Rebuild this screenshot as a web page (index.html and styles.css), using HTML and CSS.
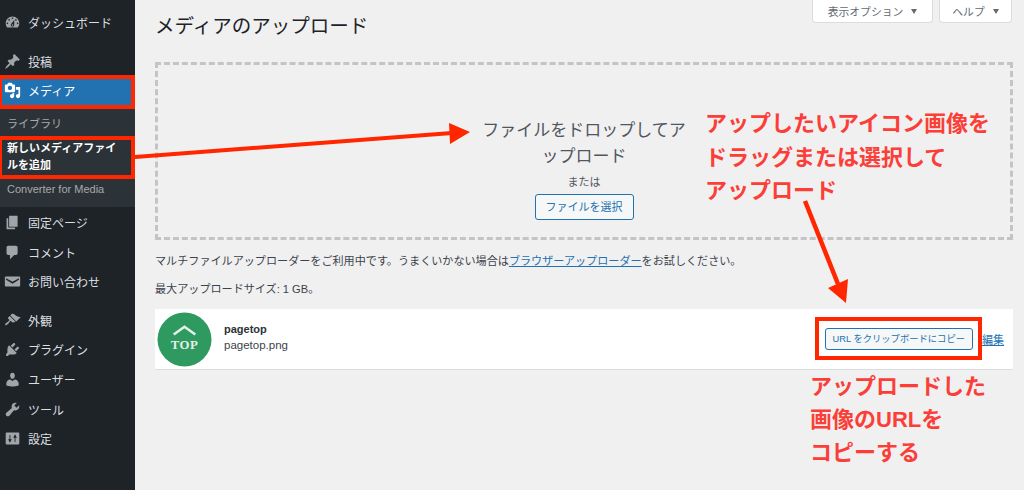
FILE: index.html
```html
<!DOCTYPE html>
<html lang="ja">
<head>
<meta charset="utf-8">
<title>メディアのアップロード</title>
<link rel="stylesheet" href="styles.css">
</head>
<body>
<div class="page">
  <nav class="sidebar">
    <ul class="menu">
      <li class="item"><svg class="icon" viewBox="0 0 20 20"><path d="M3.76 16h12.48c1.1-1.37 1.76-3.11 1.76-5 0-4.42-3.58-8-8-8s-8 3.58-8 8c0 1.89.66 3.63 1.76 5zM10 4c.55 0 1 .45 1 1s-.45 1-1 1-1-.45-1-1 .45-1 1-1zM6 6c.55 0 1 .45 1 1s-.45 1-1 1-1-.45-1-1 .45-1 1-1zm8 0c.55 0 1 .45 1 1s-.45 1-1 1-1-.45-1-1 .45-1 1-1zm-5.37 5.55L12 7v6c0 1.1-.9 2-2 2s-2-.9-2-2c0-.57.24-1.08.63-1.45zM4 10c.55 0 1 .45 1 1s-.45 1-1 1-1-.45-1-1 .45-1 1-1zm12 0c.55 0 1 .45 1 1s-.45 1-1 1-1-.45-1-1 .45-1 1-1zm-5 3c0-.55-.45-1-1-1s-1 .45-1 1 .45 1 1 1 1-.45 1-1z"/></svg>ダッシュボード</li>
      <li class="item sep"><svg class="icon" viewBox="0 0 20 20"><path d="M10.44 3.02l1.82-1.82 6.36 6.35-1.83 1.82c-1.05-.68-2.48-.57-3.41.36l-.75.75c-.92.93-1.04 2.35-.35 3.41l-1.83 1.82-2.41-2.41-2.8 2.79c-.42.42-3.38 2.71-3.8 2.29s1.86-3.39 2.28-3.81l2.79-2.79L4.1 9.36l1.83-1.82c1.05.69 2.48.57 3.4-.36l.75-.75c.93-.92 1.05-2.35.36-3.41z"/></svg>投稿</li>
      <li class="item current"><svg class="icon" viewBox="0 0 20 20"><path d="M13 11V4c0-.55-.45-1-1-1h-1.67L9 1H5L3.67 3H2c-.55 0-1 .45-1 1v7c0 .55.45 1 1 1h10c.55 0 1-.45 1-1zM7 4.5c1.38 0 2.5 1.12 2.5 2.5S8.38 9.5 7 9.5 4.5 8.38 4.5 7 5.62 4.5 7 4.5zM14 6h5v10.5c0 1.38-1.12 2.5-2.5 2.5S14 17.88 14 16.5s1.12-2.5 2.5-2.5c.17 0 .34.02.5.05V9h-3V6zm-4 8.05V13h2v3.5c0 1.38-1.12 2.5-2.5 2.5S7 17.88 7 16.5 8.12 14 9.5 14c.17 0 .34.02.5.05z"/></svg>メディア</li>
      <li class="submenu">
        <a class="subitem">ライブラリ</a>
        <a class="subitem active">新しいメディアファイルを追加</a>
        <a class="subitem">Converter for Media</a>
      </li>
      <li class="item"><svg class="icon" viewBox="0 0 20 20"><path d="M6 15V2h10v13H6zm-1 1h8v2H3V5h2v11z"/></svg>固定ページ</li>
      <li class="item"><svg class="icon" viewBox="0 0 20 20"><path d="M5 2h9c1.1 0 2 .9 2 2v7c0 1.1-.9 2-2 2h-2l-5 5v-5H5c-1.1 0-2-.9-2-2V4c0-1.1.9-2 2-2z"/></svg>コメント</li>
      <li class="item"><svg class="icon" viewBox="0 0 20 20"><path fill-rule="evenodd" d="M2 4h16c.6 0 1 .4 1 1v10c0 .6-.4 1-1 1H2c-.6 0-1-.4-1-1V5c0-.6.4-1 1-1zm.5 2.2v1.7L10 12.6l7.5-4.7V6.200L10 10.400z"/></svg>お問い合わせ</li>
      <li class="item sep"><svg class="icon" viewBox="0 0 20 20"><path d="M14.48 11.06L7.41 3.99l1.5-1.5c.5-.56 2.3-.47 3.51.32 1.21.8 1.43 1.28 2.91 2.1 1.18.64 2.45 1.26 4.45.85zm-.71.71L6.7 4.7 4.93 6.47c-.39.39-.39 1.02 0 1.41l1.06 1.06c.39.39.39 1.03 0 1.42-.6.6-1.43 1.11-2.21 1.69-.35.26-.7.53-1.01.84C1.43 13.71.96 15.12 1.4 15.56c.44.44 1.86-.02 3.17-1.33.31-.31.58-.66.85-1.01.57-.78 1.08-1.61 1.69-2.21.39-.39 1.02-.39 1.41 0l1.06 1.06c.39.39 1.02.39 1.41 0z"/></svg>外観</li>
      <li class="item"><svg class="icon" viewBox="0 0 20 20"><path d="M13.11 4.36L9.87 7.6 8 5.73l3.24-3.24c.35-.34 1.05-.2 1.56.32.52.51.66 1.21.31 1.55zm-8 1.77l.91-1.12 9.01 9.01-1.19.84c-.71.71-2.63 1.16-3.82 1.16H6.14L4.9 17.26c-.59.59-1.54.59-2.12 0-.59-.58-.59-1.53 0-2.12l1.24-1.24v-3.88c0-1.13.4-3.19 1.09-3.89zm7.26 3.97l3.24-3.24c.34-.35 1.04-.21 1.55.31.52.51.66 1.21.31 1.55l-3.24 3.25z"/></svg>プラグイン</li>
      <li class="item"><svg class="icon" viewBox="0 0 20 20"><path d="M10 9.25c-2.27 0-2.73-3.44-2.73-3.44C7 4.02 7.82 2 9.97 2c2.16 0 2.98 2.02 2.71 3.81 0 0-.41 3.44-2.68 3.44zm0 2.57L12.72 10c2.39 0 4.52 2.33 4.52 4.53v2.49s-3.65 1.13-7.24 1.13c-3.65 0-7.24-1.13-7.24-1.13v-2.49c0-2.25 1.94-4.48 4.47-4.48z"/></svg>ユーザー</li>
      <li class="item"><svg class="icon" viewBox="0 0 20 20"><path d="M16.68 9.77c-1.34 1.34-3.3 1.67-4.95.99l-5.41 6.52c-.99.99-2.59.99-3.58 0s-.99-2.59 0-3.57l6.52-5.42c-.68-1.65-.35-3.61.99-4.95 1.28-1.28 3.12-1.62 4.72-1.06l-2.89 2.89 2.82 2.82 2.86-2.87c.53 1.58.18 3.39-1.08 4.65z"/></svg>ツール</li>
      <li class="item"><svg class="icon" viewBox="0 0 20 20"><path fill-rule="evenodd" d="M3 3h14c.6 0 1 .4 1 1v12c0 .6-.4 1-1 1H3c-.6 0-1-.4-1-1V4c0-.6.4-1 1-1zm3.500 3v5H4.800L7 15l2.200-4H7.500V6zm7 8V9h1.700L13 5l-2.200 4h1.700v5z"/></svg>設定</li>
    </ul>
  </nav>

  <main class="content">
    <header class="top">
      <h1 class="title">メディアのアップロード</h1>
      <div class="meta">
        <span class="meta-btn options">表示オプション<i class="caret"></i></span>
        <span class="meta-btn help">ヘルプ<i class="caret"></i></span>
      </div>
    </header>

    <section class="dropzone">
      <p class="drop-title">ファイルをドロップしてア<br>ップロード</p>
      <p class="drop-or">または</p>
      <span class="btn">ファイルを選択</span>
    </section>

    <p class="note first">マルチファイルアップローダーをご利用中です。うまくいかない場合は<a class="link">ブラウザーアップローダー</a>をお試しください。</p>
    <p class="note second">最大アップロードサイズ: 1 GB。</p>

    <section class="file-row">
      <svg class="thumb" viewBox="0 0 56 56">
        <circle cx="28" cy="28" r="27.500" fill="#2f9a60"/>
        <path d="M17 23 L28 15 L39 23" fill="none" stroke="#e4f0e8" stroke-width="2.600"/>
        <text x="28" y="38" text-anchor="middle" class="thumb-text">TOP</text>
      </svg>
      <div class="file-info">
        <div class="file-name">pagetop</div>
        <div class="file-sub">pagetop.png</div>
      </div>
      <span class="btn small">URL をクリップボードにコピー</span>
      <a class="link edit">編集</a>
    </section>
  </main>

  <svg class="marks" viewBox="0 0 1024 490">
    <g fill="none" stroke="#ff2600" stroke-width="4">
      <rect x="0" y="77" width="133" height="30"/>
      <rect x="0" y="138" width="133" height="39"/>
      <rect x="817" y="319" width="163" height="39"/>
      <path d="M135 157 L452 133"/>
      <path stroke-width="4.500" d="M805 201 L838 284"/>
    </g>
    <path fill="#ff2600" d="M449 123 L470 132 L450 144 Z M828 288 L848 279 L846 303 Z"/>
  </svg>

  <div class="note-a">アップしたいアイコン画像を<br>ドラッグまたは選択して<br>アップロード</div>
  <div class="note-b">アップロードした<br>画像のURLを<br>コピーする</div>
</div>
</body>
</html>
```
FILE: styles.css
```css
* { box-sizing: border-box; }
html, body { margin: 0; padding: 0; }
body {
  background: #f0f0f1;
  color: #3c434a;
  font-family: "Liberation Sans", "Noto Sans CJK JP", sans-serif;
}
.page {
  position: relative;
  display: flex;
  width: 1024px;
  height: 490px;
  overflow: hidden;
}

/* sidebar */
.sidebar {
  flex: 0 0 135px;
  background: #1d2327;
  color: #dcdfe1;
}
.menu { list-style: none; margin: 0; padding: 7px 0 0; }
.item {
  position: relative;
  display: flex;
  align-items: center;
  height: 29.6px;
  padding: 2px 0 0 4px;
  font-size: 12px;
  white-space: nowrap;
}
.item.sep { margin-top: 9px; }
.icon {
  flex: 0 0 17px;
  width: 17px;
  height: 17px;
  margin-right: 7px;
  fill: #a0a5aa;
}
.current { background: #2271b1; color: #fff; }
.current .icon { fill: #fff; }
.current::after {
  content: "";
  position: absolute;
  right: 0;
  top: 50%;
  margin-top: -4px;
  border: 4px solid transparent;
  border-right-color: #f0f0f1;
}
.submenu {
  background: #2c3338;
  padding: 8px 0 5px;
  font-size: 11px;
  line-height: 17px;
  color: #a7aaad;
}
.subitem { display: block; padding: 3.500px 14px 3.500px 7px; }
.subitem.active { color: #fff; font-weight: 700; }

/* content */
.content {
  flex: 1;
  min-width: 0;
  padding: 0 11px 0 20px;
}
.top {
  display: flex;
  justify-content: space-between;
  align-items: flex-start;
  height: 62px;
}
.title {
  margin: 12px 0 0;
  font-size: 19.500px;
  font-weight: 400;
  line-height: 28px;
  color: #1d2327;
}
.meta { display: flex; gap: 6px; padding-right: 1px; }
.meta-btn {
  display: flex;
  align-items: center;
  justify-content: center;
  height: 23px;
  background: #fff;
  border: 1px solid #dcdcde;
  border-top: 0;
  border-radius: 0 0 4px 4px;
  font-size: 10.800px;
  color: #646970;
}
.meta-btn.options { width: 121px; }
.meta-btn.help { width: 73px; }
.caret {
  margin-left: 8px;
  border: 3.500px solid transparent;
  border-top: 5px solid #646970;
  border-bottom: 0;
}

.dropzone {
  height: 178px;
  border: 3px dashed #c3c4c7;
  text-align: center;
  padding-top: 53px;
}
.drop-title {
  margin: 0;
  font-size: 17px;
  line-height: 26px;
  color: #50575e;
}
.drop-or {
  margin: 4px 0 4px;
  font-size: 11px;
  line-height: 16px;
  color: #50575e;
}
.btn {
  display: inline-block;
  height: 26px;
  line-height: 24px;
  padding: 0 10px;
  border: 1px solid #2271b1;
  border-radius: 3px;
  background: #f6f7f7;
  color: #2271b1;
  font-size: 11px;
  white-space: nowrap;
}
.note {
  margin: 0;
  font-size: 11.100px;
  line-height: 16px;
  color: #3c434a;
}
.note.first { margin-top: 13px; }
.note.second { margin-top: 12px; }
.link { color: #2271b1; text-decoration: underline; }

.file-row {
  display: flex;
  align-items: center;
  height: 60px;
  margin-top: 12px;
  padding: 0 9px 0 2px;
  background: #fff;
  box-shadow: 0 1px 0 #dcdcde;
}
.thumb { flex: 0 0 55px; width: 55px; height: 55px; }
.thumb-text {
  font-family: "Liberation Serif", serif;
  font-weight: 700;
  font-size: 13px;
  letter-spacing: .5px;
  fill: #e4f0e8;
}
.file-info {
  flex: 1;
  margin-left: 12px;
  padding-bottom: 4px;
  font-size: 11px;
  line-height: 16px;
}
.file-name { font-weight: 700; color: #2c3338; }
.file-sub { color: #3c434a; font-size: 11.500px; }
.btn.small {
  height: 22px;
  line-height: 20px;
  padding: 0 7px;
  font-size: 9.300px;
  margin-right: 9px;
}
.edit { font-size: 11px; }

/* annotations lying over the page */
.marks {
  position: absolute;
  left: 0;
  top: 0;
  width: 1024px;
  height: 490px;
  pointer-events: none;
}
.note-a, .note-b {
  position: absolute;
  font-size: 22px;
  font-weight: 700;
  color: #fb3f38;
  white-space: nowrap;
}
.note-a { left: 705px; top: 107px; line-height: 33.500px; }
.note-b { left: 810px; top: 370px; line-height: 33px; }
```
